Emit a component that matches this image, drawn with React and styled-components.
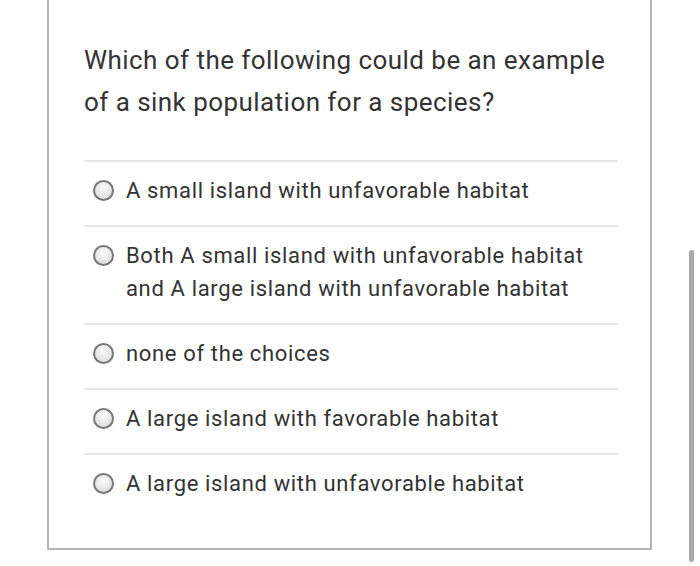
import React from 'react'
import styled, { createGlobalStyle } from 'styled-components'

const Global = createGlobalStyle`
  html, body {
    margin: 0;
    padding: 0;
    background: #ffffff;
    font-family: Roboto, "Liberation Sans", Arial, sans-serif;
  }
`

const Page = styled.div`
  position: relative;
  width: 700px;
  height: 566px;
  overflow: hidden;
  background: #fff;
`

const Card = styled.div`
  margin-left: 47px;
  width: 605px;
  height: 550px;
  border: 2px solid #b4b4b4;
  border-top: none;
  padding: 39px 0 0 35px;
  box-sizing: border-box;
`

const Question = styled.p`
  margin: 0;
  font-size: 26px;
  letter-spacing: 0.45px;
  line-height: 42px;
  color: #333;
  width: 560px;
`

const Options = styled.ul`
  list-style: none;
  margin: 37px 0 0;
  padding: 0;
  width: 534px;
`

const Option = styled.li`
  display: flex;
  align-items: flex-start;
  border-top: 2px solid #e6e6e6;
  padding: 12px 0 18px 9px;
`

const Radio = styled.span`
  flex: none;
  width: 17px;
  height: 17px;
  margin-top: 6px;
  margin-right: 12px;
  border-radius: 50%;
  border: 2px solid #777;
  background: radial-gradient(circle at 50% 35%, #fafafa 0%, #e6e6e6 60%, #d2d2d2 100%);
`

const Label = styled.span`
  font-size: 22px;
  letter-spacing: 0.65px;
  line-height: 33px;
  color: #333;
`

const Scrollbar = styled.div`
  position: absolute;
  left: 689px;
  top: 250px;
  width: 5px;
  height: 312px;
  border-radius: 3px;
  background: #a9a9a9;
`

const choices = [
  ['A small island with unfavorable habitat'],
  ['Both A small island with unfavorable habitat', 'and A large island with unfavorable habitat'],
  ['none of the choices'],
  ['A large island with favorable habitat'],
  ['A large island with unfavorable habitat'],
]

export default function App() {
  return (
    <Page>
      <Global />
      <Card>
        <Question>
          Which of the following could be an example
          <br />
          of a sink population for a species?
        </Question>
        <Options>
          {choices.map((lines, i) => (
            <Option key={i}>
              <Radio />
              <Label>
                {lines.map((l, j) => (
                  <React.Fragment key={j}>
                    {j > 0 && <br />}
                    {l}
                  </React.Fragment>
                ))}
              </Label>
            </Option>
          ))}
        </Options>
      </Card>
      <Scrollbar />
    </Page>
  )
}
